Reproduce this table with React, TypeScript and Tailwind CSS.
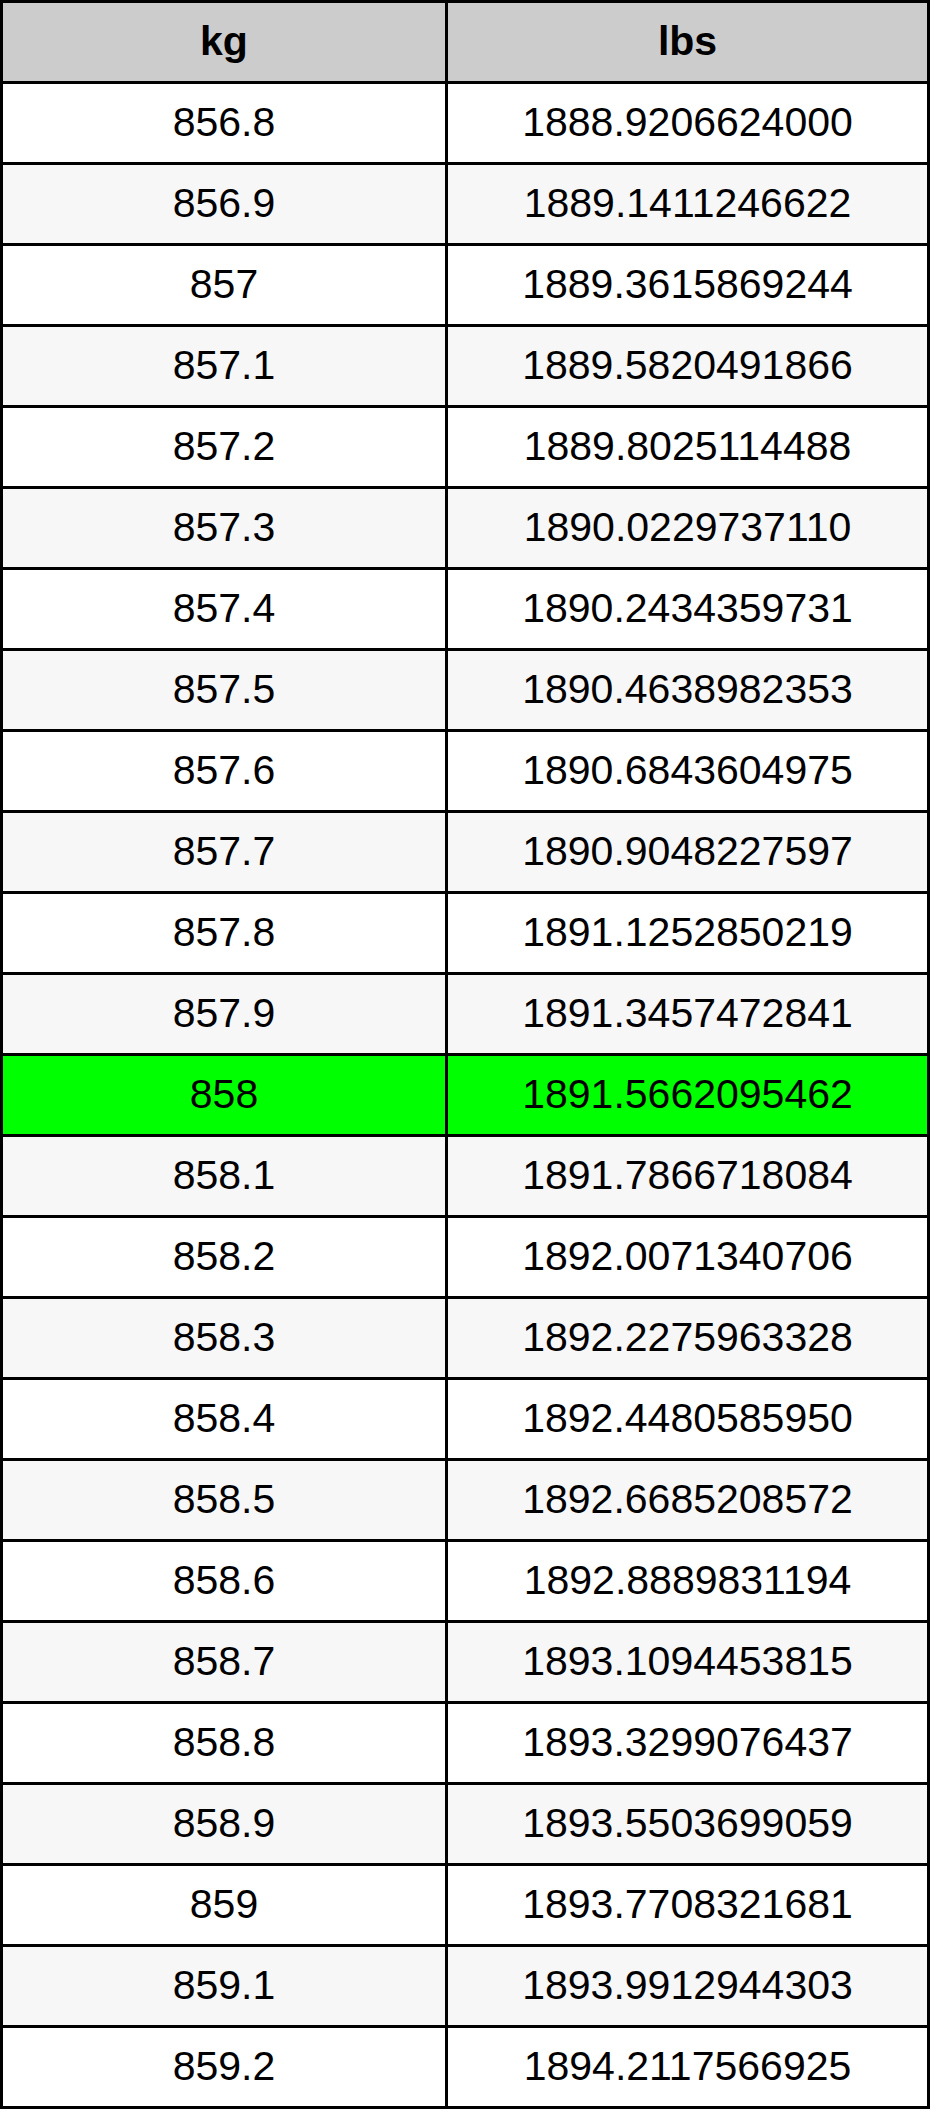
const rows: [string, string][] = [
  ['856.8', '1888.9206624000'],
  ['856.9', '1889.1411246622'],
  ['857', '1889.3615869244'],
  ['857.1', '1889.5820491866'],
  ['857.2', '1889.8025114488'],
  ['857.3', '1890.0229737110'],
  ['857.4', '1890.2434359731'],
  ['857.5', '1890.4638982353'],
  ['857.6', '1890.6843604975'],
  ['857.7', '1890.9048227597'],
  ['857.8', '1891.1252850219'],
  ['857.9', '1891.3457472841'],
  ['858', '1891.5662095462'],
  ['858.1', '1891.7866718084'],
  ['858.2', '1892.0071340706'],
  ['858.3', '1892.2275963328'],
  ['858.4', '1892.4480585950'],
  ['858.5', '1892.6685208572'],
  ['858.6', '1892.8889831194'],
  ['858.7', '1893.1094453815'],
  ['858.8', '1893.3299076437'],
  ['858.9', '1893.5503699059'],
  ['859', '1893.7708321681'],
  ['859.1', '1893.9912944303'],
  ['859.2', '1894.2117566925'],
]

export default function App() {
  return (
    <div className="w-[930px] bg-white font-['Liberation_Sans',Arial,sans-serif] text-[41px] text-black">
      <div className="border-[3px] border-black">
        {/* header */}
        <div className="flex h-[81px] border-b-[3px] border-black bg-[#cccccc] font-bold">
          <div className="flex w-[445px] items-center justify-center border-r-[3px] border-black">kg</div>
          <div className="flex flex-1 items-center justify-center">lbs</div>
        </div>
        {rows.map(([kg, lbs], i) => {
          const bg = kg === '858' ? 'bg-[#00ff00]' : i % 2 === 1 ? 'bg-[#f7f7f7]' : 'bg-white'
          const last = i === rows.length - 1
          return (
            <div
              key={kg}
              className={`flex ${last ? 'h-[78px]' : 'h-[81px] border-b-[3px] border-black'} ${bg}`}
            >
              <div className="flex w-[445px] items-center justify-center border-r-[3px] border-black">{kg}</div>
              <div className="flex flex-1 items-center justify-center">{lbs}</div>
            </div>
          )
        })}
      </div>
    </div>
  )
}
